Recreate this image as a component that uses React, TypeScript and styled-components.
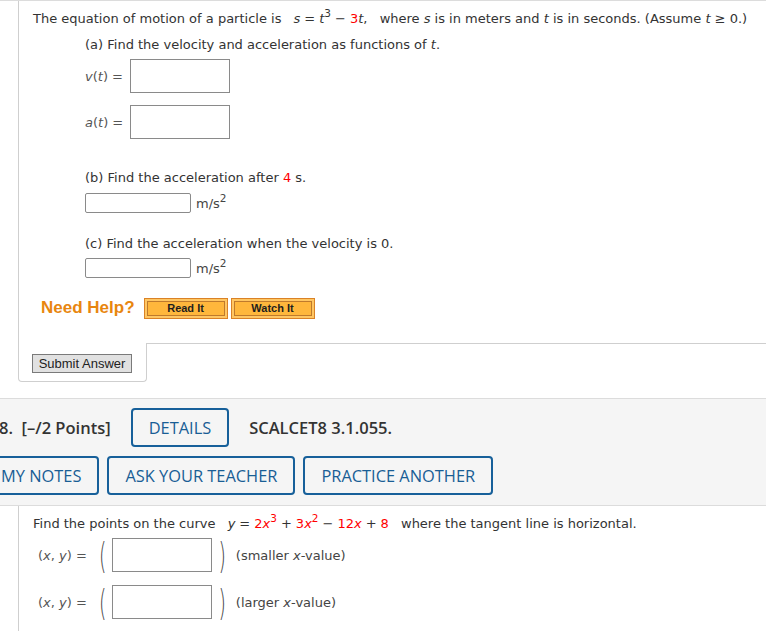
import React from "react";
import styled, { createGlobalStyle } from "styled-components";

const GlobalStyle = createGlobalStyle`
  html, body { margin: 0; padding: 0; background: #fff; }
  body {
    font-family: "DejaVu Sans", Verdana, sans-serif;
    font-size: 13px;
    color: #333;
    overflow: hidden;
  }
`;

const Page = styled.div`
  width: 766px;
  border-top: 1px solid #dcdcdc;
  overflow: hidden;
`;

const QuestionBody = styled.div`
  margin-left: 18px;
  border-left: 1px solid #cfcfcf;
  padding: 8px 0 25px 14px;
`;

const Line = styled.div<{ $indent?: number; $top?: number }>`
  line-height: 20px;
  margin-left: ${(p) => p.$indent ?? 0}px;
  margin-top: ${(p) => p.$top ?? 0}px;
  white-space: nowrap;
`;

const Var = styled.i`
  font-style: italic;
`;

const Red = styled.span`
  color: #f00;
`;

const Sup = styled.sup`
  font-size: 10.5px;
  line-height: 0;
  vertical-align: 6px;
`;

const Formula = styled.span`
  margin: 0 8px;
`;

const Op = styled.span`
  margin: 0 4px;
`;

const AnswerRow = styled.div<{ $top: number }>`
  display: flex;
  align-items: center;
  margin-left: 52px;
  margin-top: ${(p) => p.$top}px;
`;

const Label = styled.span<{ $w: number }>`
  width: ${(p) => p.$w}px;
  color: #555;
  white-space: nowrap;
`;

const BigInput = styled.div`
  width: 98px;
  height: 32px;
  border: 1px solid #8a8a8a;
  background: #fff;
`;

const SmallInput = styled.div`
  width: 104px;
  height: 18px;
  border: 1px solid #8a8a8a;
  border-radius: 2px;
  background: #fff;
`;

const Unit = styled.span`
  margin-left: 5px;
  color: #444;
`;

const HelpRow = styled.div`
  display: flex;
  align-items: center;
  margin-left: 8px;
  margin-top: 20px;
  height: 20px;
`;

const HelpTitle = styled.span`
  font-family: "Liberation Sans", Arial, sans-serif;
  font-weight: bold;
  font-size: 17px;
  color: #e8860f;
  margin-right: 9px;
`;

const HelpButton = styled.button`
  width: 84px;
  height: 21px;
  padding: 2px;
  margin-right: 3px;
  border: 1px solid #da8226;
  background: #ffc662;
  box-sizing: border-box;
  cursor: pointer;
`;

const HelpInner = styled.span`
  display: flex;
  height: 100%;
  align-items: center;
  justify-content: center;
  border: 1px solid #bf7a2c;
  background: #ffb73c;
  box-sizing: border-box;
  font: bold 11px "Liberation Sans", Arial, sans-serif;
  color: #1e1e1e;
`;

const SubmitRow = styled.div`
  display: flex;
`;

const SubmitTab = styled.div`
  margin-left: 18px;
  width: 129px;
  height: 39px;
  box-sizing: border-box;
  border: 1px solid #cfcfcf;
  border-top: none;
  border-radius: 0 0 4px 4px;
  padding: 11px 0 0 13px;
`;

const Filler = styled.div`
  flex: 1;
  border-top: 1px solid #cfcfcf;
`;

const SubmitButton = styled.button`
  width: 100px;
  height: 19px;
  padding: 0;
  border: 1px solid #7a7a7a;
  background: #e1e1e1;
  font: 13px "Liberation Sans", Arial, sans-serif;
  color: #222;
  line-height: 17px;
`;

const HeaderBand = styled.div`
  margin-top: 16px;
  background: #f5f5f5;
  border-top: 1px solid #dcdcdc;
  border-bottom: 1px solid #dcdcdc;
  padding: 9px 0 10px;
  display: flex;
  flex-direction: column;
  gap: 9px;
  font-family: "Open Sans", sans-serif;
  font-size: 16.5px;
`;

const HeaderRow = styled.div<{ $shift: number; $gap: number }>`
  display: flex;
  align-items: center;
  margin-left: ${(p) => p.$shift}px;
  gap: ${(p) => p.$gap}px;
`;

const Strong = styled.span<{ $gap?: number }>`
  font-weight: 600;
  color: #333;
  white-space: nowrap;
  margin: 0 ${(p) => p.$gap ?? 0}px;
`;

const OutlineButton = styled.button<{ $lead?: number }>`
  height: 39px;
  box-sizing: border-box;
  border: 2px solid #17609a;
  border-radius: 4px;
  background: transparent;
  padding: 0 16px;
  margin-left: ${(p) => p.$lead ?? 0}px;
  font-family: "Open Sans", sans-serif;
  font-size: 16.4px;
  color: #195e95;
  white-space: nowrap;
`;

const SecondBody = styled.div`
  margin-left: 18px;
  border-left: 1px solid #cfcfcf;
  padding: 8px 0 20px 14px;
`;

const PointRow = styled.div<{ $top: number }>`
  display: flex;
  align-items: center;
  margin-left: 5px;
  margin-top: ${(p) => p.$top}px;
  height: 34px;
`;

const Paren = styled.span<{ $side: "l" | "r" }>`
  display: inline-block;
  font-family: "DejaVu Sans", sans-serif;
  font-weight: 200;
  font-size: 19px;
  line-height: 1;
  color: #444;
  transform: scaleY(1.9);
  margin: ${(p) => (p.$side === "l" ? "0 6px 0 6px" : "0 10px 0 6px")};
`;

const Note = styled.span`
  color: #444;
  white-space: nowrap;
`;

export default function App() {
  return (
    <>
      <GlobalStyle />
      <Page>
        <QuestionBody>
          <Line>
            The equation of motion of a particle is
            <Formula>
              {" "}
              <Var>s</Var>
              <Op>=</Op>
              <Var>t</Var>
              <Sup>3</Sup>
              <Op>−</Op>
              <Red>3</Red>
              <Var>t</Var>,
            </Formula>{" "}
            where <Var>s</Var> is in meters and <Var>t</Var> is in seconds.
            (Assume <Var>t</Var> ≥ 0.)
          </Line>
          <Line $indent={52} $top={6}>
            (a) Find the velocity and acceleration as functions of <Var>t</Var>.
          </Line>
          <AnswerRow $top={4}>
            <Label $w={45}>
              <Var>v</Var>(<Var>t</Var>) =
            </Label>
            <BigInput />
          </AnswerRow>
          <AnswerRow $top={12}>
            <Label $w={45}>
              <Var>a</Var>(<Var>t</Var>) =
            </Label>
            <BigInput />
          </AnswerRow>
          <Line $indent={52} $top={29}>
            (b) Find the acceleration after <Red>4</Red> s.
          </Line>
          <AnswerRow $top={5}>
            <SmallInput />
            <Unit>
              m/s<Sup>2</Sup>
            </Unit>
          </AnswerRow>
          <Line $indent={52} $top={21}>
            (c) Find the acceleration when the velocity is 0.
          </Line>
          <AnswerRow $top={4}>
            <SmallInput />
            <Unit>
              m/s<Sup>2</Sup>
            </Unit>
          </AnswerRow>
          <HelpRow>
            <HelpTitle>Need Help?</HelpTitle>
            <HelpButton>
              <HelpInner>Read It</HelpInner>
            </HelpButton>
            <HelpButton>
              <HelpInner>Watch It</HelpInner>
            </HelpButton>
          </HelpRow>
        </QuestionBody>
        <SubmitRow>
          <SubmitTab>
            <SubmitButton>Submit Answer</SubmitButton>
          </SubmitTab>
          <Filler />
        </SubmitRow>

        <HeaderBand>
          <HeaderRow $shift={-1} $gap={9}>
            <Strong>8.&nbsp;&nbsp;[–/2 Points]</Strong>
            <OutlineButton $lead={11}>DETAILS</OutlineButton>
            <Strong $gap={11}>SCALCET8 3.1.055.</Strong>
          </HeaderRow>
          <HeaderRow $shift={-17} $gap={8}>
            <OutlineButton>MY NOTES</OutlineButton>
            <OutlineButton>ASK YOUR TEACHER</OutlineButton>
            <OutlineButton>PRACTICE ANOTHER</OutlineButton>
          </HeaderRow>
        </HeaderBand>

        <SecondBody>
          <Line>
            Find the points on the curve
            <Formula>
              {" "}
              <Var>y</Var>
              <Op>=</Op>
              <Red>
                2<Var>x</Var>
                <Sup>3</Sup>
              </Red>
              <Op>+</Op>
              <Red>
                3<Var>x</Var>
                <Sup>2</Sup>
              </Red>
              <Op>−</Op>
              <Red>
                12<Var>x</Var>
              </Red>
              <Op>+</Op>
              <Red>8</Red>
            </Formula>{" "}
            where the tangent line is horizontal.
          </Line>
          <PointRow $top={4}>
            <Label $w={55}>
              (<Var>x</Var>, <Var>y</Var>) =
            </Label>
            <Paren $side="l">(</Paren>
            <BigInput />
            <Paren $side="r">)</Paren>
            <Note>
              (smaller <Var>x</Var>-value)
            </Note>
          </PointRow>
          <PointRow $top={13}>
            <Label $w={55}>
              (<Var>x</Var>, <Var>y</Var>) =
            </Label>
            <Paren $side="l">(</Paren>
            <BigInput />
            <Paren $side="r">)</Paren>
            <Note>
              (larger <Var>x</Var>-value)
            </Note>
          </PointRow>
        </SecondBody>
      </Page>
    </>
  );
}
